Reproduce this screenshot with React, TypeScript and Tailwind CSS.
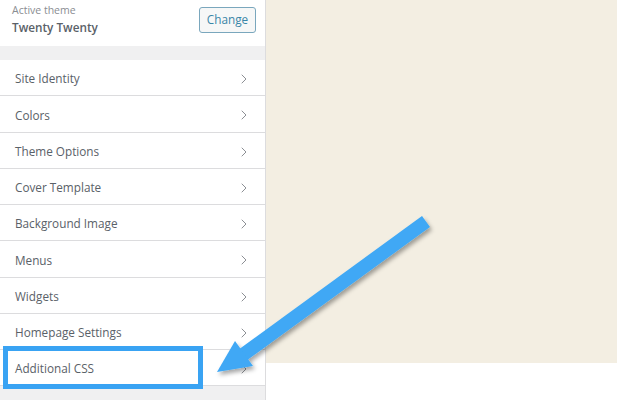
import { ChevronRight } from "lucide-react";

const sections = [
  "Site Identity",
  "Colors",
  "Theme Options",
  "Cover Template",
  "Background Image",
  "Menus",
  "Widgets",
  "Homepage Settings",
  "Additional CSS",
];

export default function App() {
  return (
    <div
      className="relative flex h-[400px] w-[617px] overflow-hidden bg-white"
      style={{ fontFamily: '"Open Sans", "Noto Sans", sans-serif' }}
    >
      {/* Customizer sidebar */}
      <div className="flex w-[266px] flex-col border-r border-[#dcdcde] bg-[#f0f0f1]">
        <div className="flex h-[46px] items-start justify-between bg-white pl-[12px] pr-[9px]">
          <div className="mt-[1px]">
            <p className="text-[10.5px] leading-[18px] text-[#8a8d92]">Active theme</p>
            <p className="text-[11.75px] font-semibold leading-[16px] text-[#5a6168]">Twenty Twenty</p>
          </div>
          <button className="mt-[7px] h-[26px] w-[57px] rounded-[3px] border border-[#7aa7bd] bg-[#f6f7f7] text-[11.75px] text-[#3a86a8]">
            Change
          </button>
        </div>

        <ul className="mt-[14px] bg-white">
          {sections.map((s) => (
            <li
              key={s}
              className="flex h-[36.25px] items-center justify-between border-b border-[#dcdcde] pl-[15px] pr-[13px] pt-[3px] text-[11.75px] text-[#5a6168]"
            >
              <span>{s}</span>
              <ChevronRight size={16} strokeWidth={1.5} className="text-[#8c8f94]" />
            </li>
          ))}
        </ul>
      </div>

      {/* Preview */}
      <div className="flex flex-1 flex-col">
        <div className="h-[363px] bg-[#f3eee2]" />
        <div className="flex-1 bg-white" />
      </div>

      {/* Highlight box */}
      <div className="absolute left-[3px] top-[346px] h-[43px] w-[200px] border-[5px] border-[#39a3f3]" />

      {/* Arrow */}
      <svg className="pointer-events-none absolute left-0 top-0" width="617" height="400" viewBox="0 0 617 400">
        <defs>
          <filter id="sh" x="-20%" y="-20%" width="140%" height="140%">
            <feDropShadow dx="2" dy="3" stdDeviation="2" floodColor="#000" floodOpacity="0.35" />
          </filter>
        </defs>
        <g filter="url(#sh)" fill="#3fa8f5">
          <polygon points="422,216 430,227 246,361 238,350" />
          <polygon points="235,341 217,372 253,366" />
        </g>
      </svg>
    </div>
  );
}
